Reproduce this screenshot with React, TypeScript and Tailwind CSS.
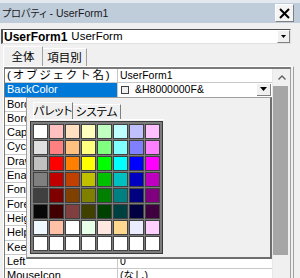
const palette = [
  ["#ffffff", "#ffc0c0", "#ffe0c0", "#ffffc0", "#c0ffc0", "#c0ffff", "#c0c0ff", "#ffc0ff"],
  ["#e0e0e0", "#ff8080", "#ffc080", "#ffff80", "#80ff80", "#80ffff", "#8080ff", "#ff80ff"],
  ["#c0c0c0", "#ff0000", "#ff8000", "#ffff00", "#00ff00", "#00ffff", "#0000ff", "#ff00ff"],
  ["#808080", "#c00000", "#c04000", "#c0c000", "#00c000", "#00c0c0", "#0000c0", "#c000c0"],
  ["#404040", "#800000", "#804000", "#808000", "#008000", "#008080", "#000080", "#800080"],
  ["#080808", "#400000", "#804040", "#404000", "#004000", "#004040", "#000040", "#400040"],
  ["#f0f8ff", "#ffc0a8", "#ffffff", "#e8ffe8", "#ffe8e0", "#ffd890", "#ececff", "#ffd0ff"],
  ["#ffffff", "#ffffff", "#ffffff", "#ffffff", "#ffffff", "#ffffff", "#ffffff", "#ffffff"],
];

const props = [
  { name: "(オブジェクト名)", value: "UserForm1" },
  { name: "BackColor", value: "&H8000000F&" },
  { name: "BorderColor", value: "&H80000012&" },
  { name: "BorderStyle", value: "0 - fmBorderStyleNone" },
  { name: "Caption", value: "UserForm1" },
  { name: "Cycle", value: "0 - fmCycleAllForms" },
  { name: "DrawBuffer", value: "32000" },
  { name: "Enabled", value: "True" },
  { name: "Font", value: "MS UI Gothic" },
  { name: "ForeColor", value: "&H80000012&" },
  { name: "Height", value: "180" },
  { name: "HelpContextID", value: "0" },
  { name: "KeepScrollBarsVisible", value: "3 - fmScrollBarsBoth" },
  { name: "Left", value: "0" },
  { name: "MouseIcon", value: "(なし)" },
];

function DownTriangle() {
  return (
    <svg width="7" height="4" viewBox="0 0 7 4">
      <path d="M0 0 H7 L3.5 4 Z" fill="#000" />
    </svg>
  );
}

function PropRow({ name, value, selected, wide }: { name: string; value: string; selected?: boolean; wide?: boolean }) {
  return (
    <div className="flex h-[14.3px] border-b border-[#c8c8c8] text-[11px] leading-[13px]">
      <div
        className={
          selected
            ? "w-[113px] shrink-0 border-r border-[#c8c8c8] bg-[#0078d7] text-white pl-[2px] overflow-hidden whitespace-nowrap"
            : "w-[113px] shrink-0 border-r border-[#c8c8c8] bg-white pl-[2px] overflow-hidden whitespace-nowrap"
        }
      >
        {wide ? <span className="text-[11.5px] tracking-[1.8px]">{name}</span> : name}
      </div>
      <div className="flex-1 bg-white pl-[2px] flex items-center overflow-hidden whitespace-nowrap text-[10.5px]">
        {selected ? (
          <>
            <div className="w-[8px] h-[8px] border border-[#404040] bg-[#f0f0f0] ml-[1px] mr-[6px]" />
            <span>{value}</span>
            <div className="ml-auto mr-[1px] w-[14px] h-[12px] bg-[#f0f0f0] border-r border-b border-[#808080] flex items-center justify-center">
              <DownTriangle />
            </div>
          </>
        ) : (
          <span>{value}</span>
        )}
      </div>
    </div>
  );
}

export default function App() {
  return (
    <div className="relative w-[300px] h-[278px] overflow-hidden bg-[#f0f0f0] text-black font-['Liberation_Sans','Noto_Sans_CJK_JP',sans-serif]">
      {/* title bar */}
      <div className="h-[3px] bg-[#e4e9ef]" />
      <div className="h-[20px] bg-[#bfcddb] flex items-center pl-[2px] pr-[6px]">
        <span className="text-[10px] text-[#1a1a1a] font-['Noto_Sans_CJK_JP',sans-serif] [font-feature-settings:'palt'] whitespace-nowrap">
          プロパティ<span className="font-['Liberation_Sans',sans-serif] text-[10.5px]"> - UserForm1</span>
        </span>
        <div className="ml-auto w-[19px] h-[18px] bg-[#f4f4f4] border border-t-white border-l-white border-r-[#808080] border-b-[#808080] flex items-center justify-center">
          <svg width="11" height="11" viewBox="0 0 11 11">
            <path d="M1 1 L10 10 M10 1 L1 10" stroke="#000" strokeWidth="2" />
          </svg>
        </div>
      </div>

      {/* object combo */}
      <div className="mt-[6px] ml-[1px] w-[290px] h-[15px] flex items-center bg-white border-l-2 border-t border-[#505050] border-r border-b border-r-[#e0e0e0] border-b-[#e0e0e0]">
        <span className="ml-[1px] text-[12px] font-bold leading-none">UserForm1</span>
        <span className="ml-[4px] text-[11.5px] leading-none">UserForm</span>
        <div className="ml-auto w-[13px] h-[13px] bg-[#f0f0f0] border border-t-white border-l-white border-r-[#808080] border-b-[#808080] flex items-center justify-center">
          <svg width="5" height="3" viewBox="0 0 5 3">
            <path d="M0 0 H5 L2.5 3 Z" fill="#000" />
          </svg>
        </div>
      </div>

      {/* tabs */}
      <div className="mt-[2px] h-[20px] flex items-end pl-[3px] font-['Noto_Sans_CJK_JP',sans-serif] text-[11.5px]">
        <div className="w-[40px] h-[20px] border-l border-t border-white border-r border-r-[#a0a0a0] bg-[#f0f0f0] flex items-center justify-center leading-none">
          全体
        </div>
        <div className="w-[44px] h-[18px] border-t border-white border-r border-r-[#a0a0a0] flex items-center justify-center leading-none">
          項目別
        </div>
      </div>

      {/* tab page */}
      <div className="ml-[3px] w-[291px] h-[300px] border-t border-l border-white border-r border-r-[#a0a0a0]">
        <div className="w-[287px] h-full flex border-t-2 border-l border-[#7a7a7a] border-r border-r-[#a0a0a0]">
          <div className="relative w-[267px] shrink-0 bg-white">
            {props.map((p, i) => (
              <PropRow key={p.name} name={p.name} value={p.value} selected={i === 1} wide={i === 0} />
            ))}

            {/* color popup */}
            <div className="absolute left-[21px] top-[28px] w-[246px] h-[162px] bg-[#f0f0f0] border-l border-t border-[#a0a0a0] border-r-2 border-b-2 border-r-[#6e6e6e] border-b-[#6e6e6e]">
              <div className="ml-[3px] mt-[4px] w-[134px]">
                <div className="h-[17px] flex items-end pl-[3px] font-['Noto_Sans_CJK_JP',sans-serif] text-[11.5px] [font-feature-settings:'palt']">
                  <div className="w-[40px] h-[17px] border-l border-t border-white border-r border-r-[#808080] flex items-center justify-center leading-none whitespace-nowrap">
                    パレット
                  </div>
                  <div className="w-[48px] h-[15px] border-t border-white border-r border-r-[#808080] flex items-center justify-center leading-none whitespace-nowrap">
                    システム
                  </div>
                </div>
                <div className="border-t border-white pt-[1px]">
                  <div className="w-[133px] bg-[#7c7c7c] border border-[#3a3a3a] p-[2px] grid grid-cols-8 gap-[1px]">
                    {palette.flat().map((c, i) => (
                      <div
                        key={i}
                        className="w-[15px] h-[15px] border border-[#404040]"
                        style={{ backgroundColor: c }}
                      />
                    ))}
                  </div>
                </div>
              </div>
            </div>
          </div>

          {/* scrollbar */}
          <div className="w-[18px] shrink-0 flex flex-col bg-[#f0f0f0] border-l border-[#e8e8e8]">
            <div className="h-[16px] flex items-center justify-center">
              <svg width="8" height="5" viewBox="0 0 8 5">
                <path d="M0.5 4.5 L4 1 L7.5 4.5" fill="none" stroke="#606060" strokeWidth="1.4" />
              </svg>
            </div>
            <div className="mt-[1px] w-[15px] h-[169px] bg-[#a6a6a6]" />
          </div>
        </div>
      </div>
    </div>
  );
}
